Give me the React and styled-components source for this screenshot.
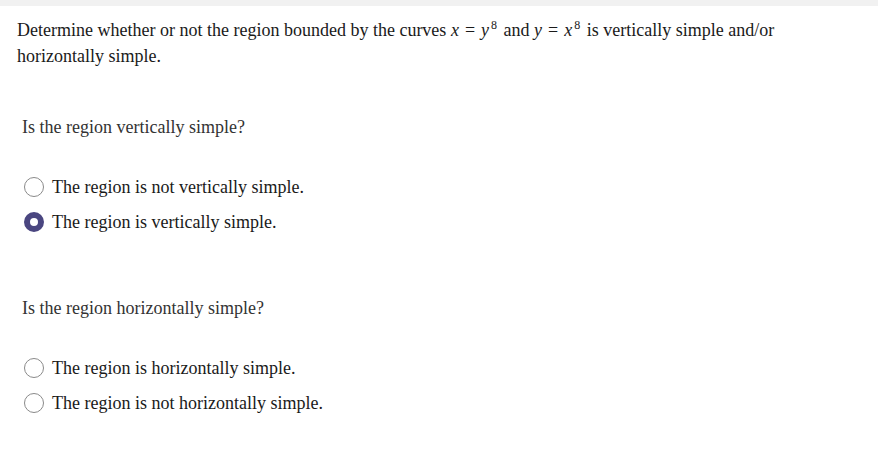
import React from "react";
import styled, { createGlobalStyle } from "styled-components";

const Global = createGlobalStyle`
  html, body {
    margin: 0;
    padding: 0;
    background: #fff;
  }
  body {
    font-family: "Liberation Serif", "Times New Roman", serif;
    color: #222;
  }
`;

const TopBar = styled.div`
  height: 6px;
  background: #f1f1f1;
`;

const Page = styled.div`
  padding: 11px 17px 0 17px;
`;

const Prompt = styled.p`
  margin: 0;
  font-size: 18px;
  line-height: 26px;
  color: #1a1a1a;
`;

const Var = styled.i`
  font-style: italic;
`;

const Eq = styled.span`
  margin: 0 6px;
`;

const Sup = styled.sup`
  font-size: 12px;
  vertical-align: 7px;
  line-height: 0;
  margin-left: 2px;
  margin-right: 2px;
`;

const Section = styled.div`
  margin-top: ${(p) => p.$top}px;
  padding-left: 5px;
`;

const Question = styled.div`
  font-size: 18px;
  line-height: 26px;
  color: #333;
`;

const Options = styled.div`
  margin-top: 34px;
  display: flex;
  flex-direction: column;
  gap: 9px;
  margin-left: 2px;
`;

const Option = styled.label`
  display: flex;
  align-items: center;
  gap: 8px;
  font-size: 18px;
  line-height: 26px;
  color: #1a1a1a;
`;

const Radio = styled.span`
  width: 20px;
  height: 20px;
  box-sizing: border-box;
  border-radius: 50%;
  flex-shrink: 0;
  border: ${(p) => (p.$checked ? "6px solid #4a4680" : "1.5px solid #8a8a8a")};
  background: #fff;
`;

const Equation = ({ a, b }) => (
  <>
    <Var>{a}</Var>
    <Eq>=</Eq>
    <Var>{b}</Var>
    <Sup>8</Sup>
  </>
);

const Choice = ({ checked, children }) => (
  <Option>
    <Radio $checked={checked} />
    <span>{children}</span>
  </Option>
);

export default function App() {
  return (
    <>
      <Global />
      <TopBar />
      <Page>
        <Prompt>
          Determine whether or not the region bounded by the curves{" "}
          <Equation a="x" b="y" /> and <Equation a="y" b="x" /> is vertically
          simple and/or horizontally simple.
        </Prompt>
        <Section $top={45}>
          <Question>Is the region vertically simple?</Question>
          <Options>
            <Choice>The region is not vertically simple.</Choice>
            <Choice checked>The region is vertically simple.</Choice>
          </Options>
        </Section>
        <Section $top={60}>
          <Question>Is the region horizontally simple?</Question>
          <Options>
            <Choice>The region is horizontally simple.</Choice>
            <Choice>The region is not horizontally simple.</Choice>
          </Options>
        </Section>
      </Page>
    </>
  );
}
